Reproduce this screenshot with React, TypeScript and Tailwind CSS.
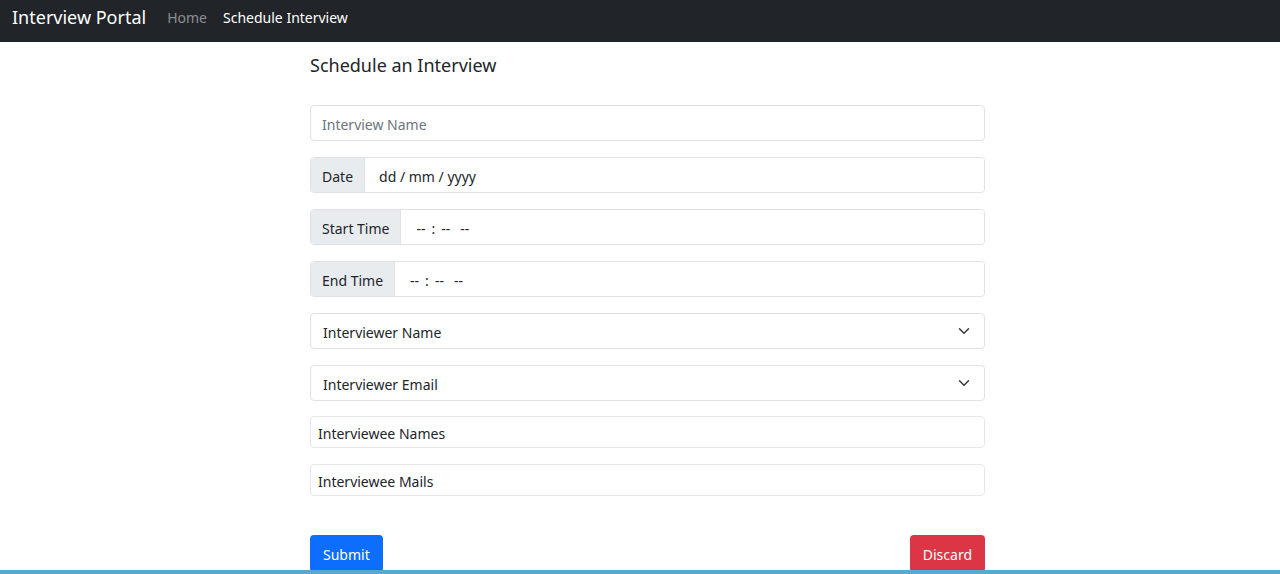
import React from "react";

const font = { fontFamily: '"Noto Sans", "Open Sans", sans-serif' };

function Chevron() {
  return (
    <svg width="12" height="12" viewBox="0 0 16 16" className="text-[#343a40]">
      <path d="M2 5l6 6 6-6" fill="none" stroke="currentColor" strokeWidth="2" strokeLinecap="round" strokeLinejoin="round" />
    </svg>
  );
}

function TimeValue() {
  return (
    <span className="flex items-center">
      <span>--</span>
      <span className="mx-[6px]">:</span>
      <span>--</span>
      <span className="ml-[10px]">--</span>
    </span>
  );
}

function AddonRow({ label, children, valueClass }: { label: string; children: React.ReactNode; valueClass: string }) {
  return (
    <div className="flex h-[36px] mb-[16px] rounded-[4px] border border-[#dee2e6] overflow-hidden">
      <div className="flex items-center pt-[2px] px-[11px] bg-[#e9ecef] border-r border-[#dee2e6] text-[14px] text-[#212529]">{label}</div>
      <div className={`flex items-center pt-[2px] flex-1 bg-white text-[14px] text-[#212529] ${valueClass}`}>{children}</div>
    </div>
  );
}

function SelectRow({ label, mb }: { label: string; mb: string }) {
  return (
    <div className={`flex items-center justify-between h-[36px] ${mb} rounded-[4px] border border-[#dee2e6] pl-[12px] pr-[14px] text-[14px] text-[#212529]`}>
      <span className="pt-[2px]">{label}</span>
      <Chevron />
    </div>
  );
}

export default function App() {
  return (
    <div className="min-h-[574px] bg-white relative" style={font}>
      <nav className="h-[42px] bg-[#212529] flex items-center px-[12px] pb-[8px]">
        <span className="text-[18px] text-white mr-[21px]">Interview Portal</span>
        <span className="text-[14px] text-[#8c8e91] mr-[16px]">Home</span>
        <span className="text-[14px] text-white">Schedule Interview</span>
      </nav>
      <main className="ml-[310px] w-[675px]">
        <h2 className="text-[18px] text-[#212529] pt-[11px] mb-[28px] leading-[24px]">Schedule an Interview</h2>
        <div className="flex items-center h-[36px] mb-[16px] rounded-[4px] border border-[#dee2e6] px-[11px] pt-[2px] text-[14px] text-[#6c757d]">
          Interview Name
        </div>
        <AddonRow label="Date" valueClass="pl-[14px]">dd / mm / yyyy</AddonRow>
        <AddonRow label="Start Time" valueClass="pl-[15px]"><TimeValue /></AddonRow>
        <AddonRow label="End Time" valueClass="pl-[15px]"><TimeValue /></AddonRow>
        <SelectRow label="Interviewer Name" mb="mb-[16px]" />
        <SelectRow label="Interviewer Email" mb="mb-[15px]" />
        <div className="flex items-center h-[32px] mb-[16px] rounded-[4px] border border-[#e5e7ea] px-[7px] pt-[2px] text-[14px] text-[#212529]">
          Interviewee Names
        </div>
        <div className="flex items-center h-[32px] rounded-[4px] border border-[#e5e7ea] px-[7px] pt-[2px] text-[14px] text-[#212529]">
          Interviewee Mails
        </div>
        <div className="flex justify-between mt-[39px]">
          <button className="h-[37px] px-[13px] pt-[1px] rounded-[4px] bg-[#0d6efd] text-white text-[14px]">Submit</button>
          <button className="h-[37px] px-[13px] pt-[1px] rounded-[4px] bg-[#dc3545] text-white text-[14px]">Discard</button>
        </div>
      </main>
      <div className="fixed left-0 right-0 bottom-0 h-[4px] bg-[#5aa7d3]" />
    </div>
  );
}
